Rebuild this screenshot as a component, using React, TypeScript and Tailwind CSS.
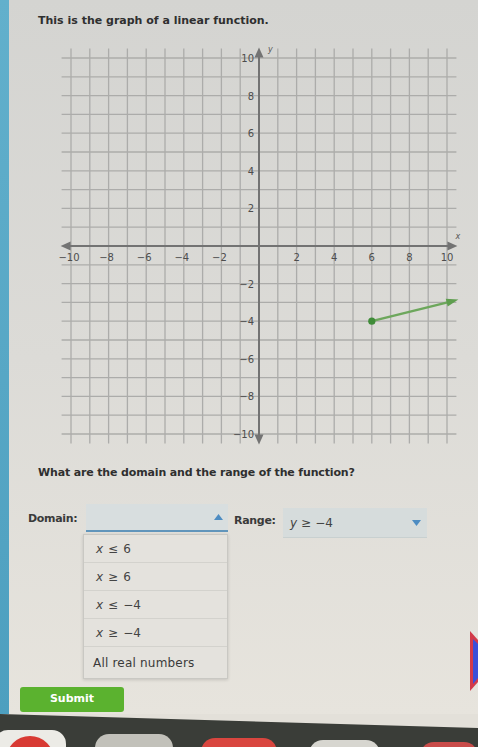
import React from "react";

const U = 18.8;
const OX = 259;
const OY = 246;
const FONT = { fontFamily: '"DejaVu Sans", Verdana, sans-serif' } as const;

function Graph() {
  const idx = Array.from({ length: 21 }, (_, i) => i - 10);
  const top = OY - 10.5 * U;
  const bot = OY + 10.5 * U;
  const left = OX - 10.5 * U;
  const right = OX + 10.5 * U;
  const gx = (v: number) => OX + v * U;
  const gy = (v: number) => OY - v * U;
  const labels = [-10, -8, -6, -4, -2, 2, 4, 6, 8, 10];
  const x1 = gx(6), y1 = gy(-4), x2 = gx(10.45), y2 = gy(-2.89);
  const ang = Math.atan2(y2 - y1, x2 - x1);
  const ah = (len: number, w: number) => {
    const bx = x2 - len * Math.cos(ang);
    const by = y2 - len * Math.sin(ang);
    const px = -Math.sin(ang) * w;
    const py = Math.cos(ang) * w;
    return `${x2 + 3 * Math.cos(ang)},${y2 + 3 * Math.sin(ang)} ${bx + px},${by + py} ${bx - px},${by - py}`;
  };
  return (
    <svg width="415" height="410" viewBox="55 44 415 410" className="block" style={FONT}>
      {idx.filter((i) => i !== 0).map((i) => (
        <line key={"v" + i} x1={gx(i)} x2={gx(i)} y1={top} y2={bot} stroke="#acacaa" strokeWidth="1.3" />
      ))}
      {idx.filter((i) => i !== 0).map((i) => (
        <line key={"h" + i} y1={gy(i)} y2={gy(i)} x1={left} x2={right} stroke="#acacaa" strokeWidth="1.3" />
      ))}
      {/* axes */}
      <line x1={left + 6} x2={right - 6} y1={OY} y2={OY} stroke="#737373" strokeWidth="2" />
      <line x1={OX} x2={OX} y1={top + 6} y2={bot - 6} stroke="#737373" strokeWidth="2" />
      <polygon points={`${left - 1},${OY} ${left + 9},${OY - 4.5} ${left + 9},${OY + 4.5}`} fill="#737373" />
      <polygon points={`${right + 1},${OY} ${right - 9},${OY - 4.5} ${right - 9},${OY + 4.5}`} fill="#737373" />
      <polygon points={`${OX},${top - 1} ${OX - 4.5},${top + 9} ${OX + 4.5},${top + 9}`} fill="#737373" />
      <polygon points={`${OX},${bot + 1} ${OX - 4.5},${bot - 9} ${OX + 4.5},${bot - 9}`} fill="#737373" />
      <text x={OX + 9} y={top + 3} fontSize="8" fontStyle="italic" fill="#555">y</text>
      <text x={right - 1} y={OY - 7} fontSize="8" fontStyle="italic" fill="#555">x</text>
      {labels.map((v) => (
        <text key={"xl" + v} x={gx(v) + (v < 0 ? -2 : 0)} y={OY + 15} fontSize="10" fill="#4d4d4d" textAnchor="middle">
          {v < 0 ? "\u2212" + Math.abs(v) : v}
        </text>
      ))}
      {labels.map((v) => (
        <text key={"yl" + v} x={OX - 5} y={gy(v) + 4} fontSize="10" fill="#4d4d4d" textAnchor="end">
          {v < 0 ? "\u2212" + Math.abs(v) : v}
        </text>
      ))}
      {/* function */}
      <line x1={x1} y1={y1} x2={x2 - 5 * Math.cos(ang)} y2={y2 - 5 * Math.sin(ang)} stroke="#6da75c" strokeWidth="2.4" />
      <polygon points={ah(9, 4)} fill="#5f9e4f" />
      <circle cx={x1} cy={y1} r="3.6" fill="#3f8c38" />
    </svg>
  );
}

function Caret({ up }: { up?: boolean }) {
  return (
    <svg width="9" height="6" viewBox="0 0 9 6" className="block">
      {up ? <polygon points="4.5,0 9,6 0,6" fill="#4d8cc2" /> : <polygon points="0,0 9,0 4.5,6" fill="#4d8cc2" />}
    </svg>
  );
}

const options: { v: string; op: string; n: string }[] = [
  { v: "x", op: "\u2264", n: "6" },
  { v: "x", op: "\u2265", n: "6" },
  { v: "x", op: "\u2264", n: "\u22124" },
  { v: "x", op: "\u2265", n: "\u22124" },
];

export default function App() {
  return (
    <div className="relative w-[478px] h-[747px] overflow-hidden bg-[#e3e0d9] text-[#333]" style={FONT}>
      <div className="flex h-[714px]">
        <div className="w-[9px] h-full bg-gradient-to-b from-[#62b0cc] to-[#4d9fbf]" />
        <div className="flex-1 flex flex-col bg-gradient-to-b from-[#d4d4d1] via-[#dcdbd7] to-[#e7e4dd]">
          <div className="mt-[14px] ml-[29px] h-[14px] leading-[14px] text-[11px] font-bold text-[#2f2f2f]">
            This is the graph of a linear function.
          </div>
          <div className="mt-[16px] ml-[46px]">
            <Graph />
          </div>
          <div className="mt-[12px] ml-[29px] h-[14px] leading-[14px] text-[11px] font-bold tracking-[-0.15px] text-[#2f2f2f]">
            What are the domain and the range of the function?
          </div>
          <div className="mt-[24px] ml-[19px] flex items-start h-[36px]">
            <span className="mt-[7px] w-[58px] text-[11px] font-bold tracking-[-0.3px] text-[#3a3a3a]">Domain:</span>
            <div className="relative">
              <div className="w-[142px] h-[28px] bg-[#d8dedf] border-b-2 border-[#6195bb] flex items-center justify-end pr-[5px]">
                <Caret up />
              </div>
              <div className="absolute left-[-3px] top-[30px] w-[145px] bg-[#e4e2dd] border border-[#c9c8c3] shadow-[0_1px_3px_rgba(0,0,0,0.15)] flex flex-col">
                {options.map((o, i) => (
                  <div key={i} className="h-[28px] flex items-center pl-[12px] border-b border-[#d3d2cd] text-[12px] text-[#444]">
                    <span className="italic">{o.v}</span>
                    <span className="ml-[5px]">{o.op}</span>
                    <span className="ml-[5px]">{o.n}</span>
                  </div>
                ))}
                <div className="h-[31px] flex items-center pl-[9px] text-[12px] tracking-[0.2px] text-[#3a3a3a]">All real numbers</div>
              </div>
            </div>
            <span className="mt-[9px] ml-[6px] w-[49px] text-[11px] font-bold tracking-[-0.3px] text-[#3a3a3a]">Range:</span>
            <div className="mt-[4px] w-[144px] h-[30px] bg-[#d6dcdc] border-b border-[#c8d0d0] flex items-center pl-[7px] pr-[6px] text-[12px] text-[#444]">
              <span className="italic">y</span>
              <span className="ml-[4px]">{"\u2265"}</span>
              <span className="ml-[4px]">{"\u22124"}</span>
              <span className="flex-1" />
              <Caret />
            </div>
          </div>
          <div className="mt-[147px] ml-[11px] w-[104px] h-[25px] rounded-[3px] bg-[#5bb22f] flex items-center justify-center text-[11px] font-bold text-white">
            Submit
          </div>
        </div>
      </div>
      <div className="h-[33px] bg-[#3a3d38] flex items-start [clip-path:polygon(0_0,100%_14px,100%_100%,0_100%)]">
        <div className="ml-[-6px] mt-[16px] w-[74px] h-[40px] rounded-[14px] bg-[#ecebe6] flex justify-center pt-[6px]">
          <div className="w-[48px] h-[48px] rounded-full bg-[#d83a33]" />
        </div>
        <div className="ml-[29px] mt-[20px] w-[80px] h-[40px] rounded-[14px] bg-[#c2c1ba]" />
        <div className="ml-[28px] mt-[24px] w-[78px] h-[40px] rounded-[14px] bg-[#d9463f]" />
        <div className="ml-[32px] mt-[26px] w-[73px] h-[40px] rounded-[14px] bg-[#d7d6d0]" />
        <div className="ml-[40px] mt-[28px] w-[60px] h-[40px] rounded-[14px] bg-[#c94c4a]" />
      </div>
      <svg className="absolute left-[469px] top-[630px]" width="9" height="62" viewBox="0 0 9 62">
        <polygon points="1,1 9,10 9,52 1,61" fill="#d23a4a" />
        <polygon points="4,9 9,14 9,48 4,54" fill="#3b4fd8" />
      </svg>
    </div>
  );
}
